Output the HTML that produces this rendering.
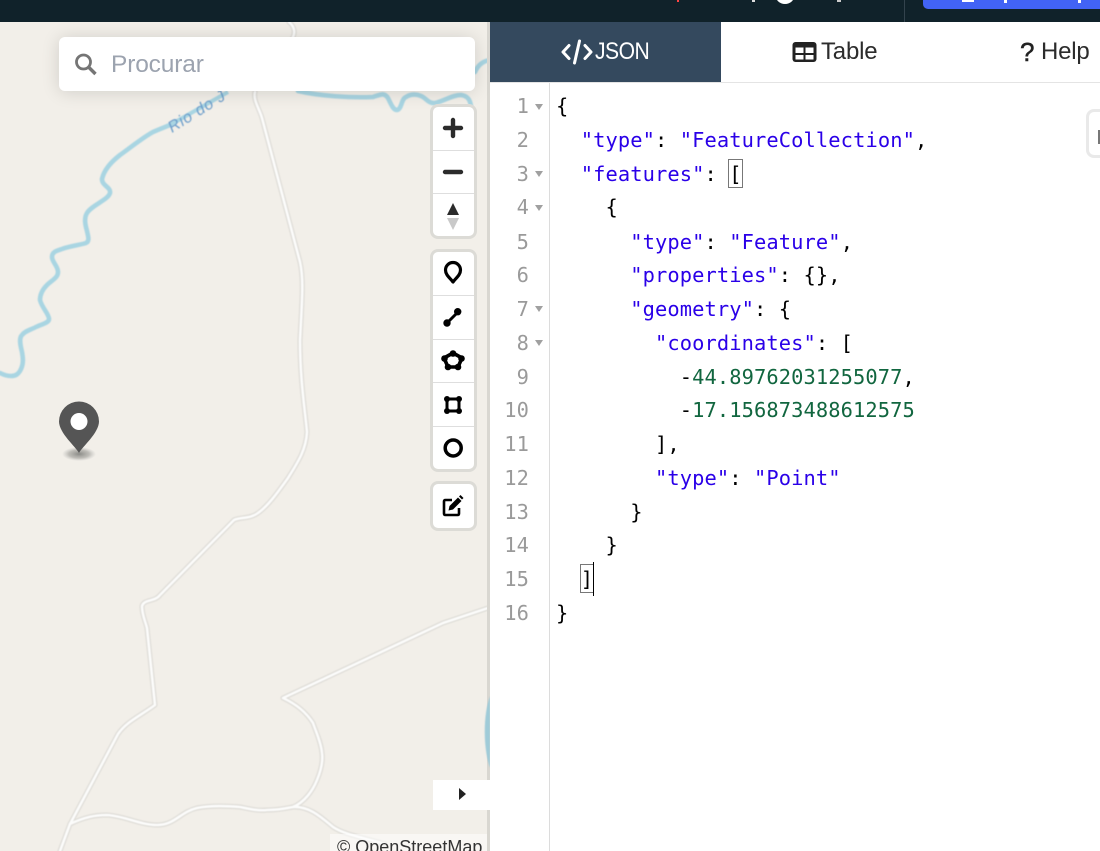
<!DOCTYPE html>
<html><head><meta charset="utf-8">
<style>
html,body{margin:0;padding:0;width:1100px;height:851px;overflow:hidden;background:#fff}
body{position:relative;font-family:"Liberation Sans",sans-serif}
.a{position:absolute}
.ln{position:absolute;left:490px;width:39px;text-align:right;font:20.4px/34px "DejaVu Sans Mono",monospace;letter-spacing:.07px;color:#9a9a9a}
.cl{position:absolute;left:556px;white-space:pre;font:20.4px/34px "DejaVu Sans Mono",monospace;letter-spacing:.1px;color:#000}
.s{color:#2a00e8}.n{color:#11663f}
.fold{position:absolute;left:535px;width:0;height:0;border-left:4.5px solid transparent;border-right:4.5px solid transparent;border-top:6px solid #a0a0a0}
.tab{position:absolute;top:22px;height:60px;font-size:24px;line-height:60px;color:#2c2c2c;letter-spacing:-.2px;white-space:nowrap}
.ctl{position:absolute;left:430px;width:47px;background:#fff;border-radius:8px;box-sizing:border-box;border:3px solid #dcdbd6}
.sep{position:absolute;left:433px;width:41px;height:1px;background:#dedede}
</style></head><body>

<!-- map -->
<div class="a" style="left:0;top:22px;width:490px;height:829px;background:#f2efe9;overflow:hidden"></div>
<svg class="a" style="left:0;top:0" width="490" height="851" viewBox="0 0 490 851" fill="none">
<g style="filter:blur(.5px)">
<g stroke="#dddbd6" stroke-width="5" stroke-linecap="round" stroke-linejoin="round">
<path d="M289 22C295 27 296 34 291 40M255 92C253 100 259 108 262 118L300 262C304 280 302 300 300 340C300 380 305 410 307 432C306 450 298 462 288 478C278 492 268 506 258 513C250 519 240 517 234 520L160 595C155 602 144 599 142 606C142 615 145 620 147 628L155 705C140 716 126 722 118 734L70 824L60 851"/>
<path d="M70 824C85 817 95 815 107 815C125 816 140 825 157 825C175 825 180 812 197 808C212 805 228 806 240 807C250 809 258 811 267 810C280 810 287 808 293 807C305 802 313 790 317 780C322 768 323 760 322 753C321 742 316 732 313 723C306 712 296 704 283 698L443 623L488 608"/>
<path d="M293 807C310 806 322 818 333 827C345 835 365 838 385 844"/>
</g>
<g stroke="#fcfcfb" stroke-width="2.6" stroke-linecap="round" stroke-linejoin="round">
<path d="M289 22C295 27 296 34 291 40M255 92C253 100 259 108 262 118L300 262C304 280 302 300 300 340C300 380 305 410 307 432C306 450 298 462 288 478C278 492 268 506 258 513C250 519 240 517 234 520L160 595C155 602 144 599 142 606C142 615 145 620 147 628L155 705C140 716 126 722 118 734L70 824L60 851"/>
<path d="M70 824C85 817 95 815 107 815C125 816 140 825 157 825C175 825 180 812 197 808C212 805 228 806 240 807C250 809 258 811 267 810C280 810 287 808 293 807C305 802 313 790 317 780C322 768 323 760 322 753C321 742 316 732 313 723C306 712 296 704 283 698L443 623L488 608"/>
<path d="M293 807C310 806 322 818 333 827C345 835 365 838 385 844"/>
</g>
<path d="M0 373C4 375 8 376 11 376C16 376 18 374 20 371C24 364 23 358 22 352C20 344 19 338 22 335C25 331 30 330 36 327C42 324 49 323 49 319C49 314 42 308 40 300C40 294 43 289 47 285C52 280 58 278 58 272C58 266 52 262 52 257C52 252 56 251 62 249C70 246 80 245 86 243C90 241 88 236 87 231C85 224 84 218 87 213C92 205 108 200 110 193C111 187 102 186 102 179C104 170 111 162 120 155C130 148 142 138 153 132C160 129 165 127 170 125" stroke="#a9d5e2" stroke-width="4.6" stroke-linecap="round" stroke-linejoin="round"/>
<path d="M170 125L228 92" stroke="#a9d5e2" stroke-width="4"/>
<path d="M298 91C320 96 350 98 373 97C380 95 384 92 388 98C391 104 393 110 397 110C402 109 401 99 406 97C411 94 416 94 421 96C426 98 429 104 435 103C442 102 452 95 461 95C468 96 470 100 471 106M475 72C478 65 483 61 490 60" stroke="#a9d5e2" stroke-width="4.6" stroke-linecap="round" stroke-linejoin="round"/>
<text transform="translate(172 133) rotate(-32)" font-family="Liberation Sans" font-style="italic" font-size="16" fill="#6f9fcb" letter-spacing=".8">Rio do J</text>
</g>
<rect x="487" y="22" width="3" height="829" fill="#d9d7d1"/>
<path d="M490 696C483 715 483 748 490 768Z" fill="#9fcbd8" style="filter:blur(.4px)"/>
</svg>

<!-- top bar -->
<div class="a" style="left:0;top:0;width:1100px;height:22px;background:#10222a"></div>
<div class="a" style="left:904px;top:0;width:1px;height:22px;background:#33434d"></div>
<div class="a" style="left:923px;top:0;width:177px;height:9px;background:#4263f5;border-radius:0 0 0 5px"></div>
<div class="a" style="left:775px;top:-7px;width:20px;height:10.5px;background:#fff;border-radius:0 0 10px 10px"></div>
<div class="a" style="left:752px;top:0;width:3px;height:2px;background:#ddd"></div>
<div class="a" style="left:677px;top:0;width:2px;height:2px;background:#f44"></div>
<div class="a" style="left:837px;top:0;width:4px;height:2px;background:#ccc"></div>
<div class="a" style="left:962px;top:0;width:12px;height:2px;background:#fff"></div>
<div class="a" style="left:1004px;top:0;width:3px;height:3px;background:#fff"></div>
<div class="a" style="left:1078px;top:0;width:3px;height:3px;background:#fff"></div>

<!-- search -->
<div class="a" style="left:59px;top:37px;width:416px;height:54px;background:#fff;border-radius:6px;box-shadow:0 1px 18px rgba(0,0,0,.14)"></div>
<svg class="a" style="left:72px;top:51px" width="28" height="26" viewBox="0 0 28 26" fill="none" stroke="#757575">
<circle cx="11.500" cy="11" r="7" stroke-width="2.800"/><path d="M16.500 16L23.500 23" stroke-width="3.400"/></svg>
<div class="a" style="left:111px;top:49px;font-size:24.500px;line-height:32px;color:#9ca3af;letter-spacing:-.15px">Procurar</div>

<!-- zoom controls -->
<div class="ctl" style="top:104px;height:135px"></div>
<div class="sep" style="top:150px"></div><div class="sep" style="top:193px"></div>
<svg class="a" style="left:430px;top:104px" width="47" height="135" viewBox="0 0 47 135">
<path d="M23 16V32M15 24H31" stroke="#2b2b2b" stroke-width="4.400" stroke-linecap="round"/>
<path d="M15 68H31" stroke="#2b2b2b" stroke-width="4.400" stroke-linecap="round"/>
<path d="M23 99L29 111H17Z" fill="#2b2b2b"/><path d="M17 114H29L23 126Z" fill="#c9c9c9"/>
</svg>

<!-- draw controls -->
<div class="ctl" style="top:249px;height:223px"></div>
<div class="sep" style="top:295px"></div><div class="sep" style="top:339px"></div><div class="sep" style="top:382px"></div><div class="sep" style="top:426px"></div>
<svg class="a" style="left:430px;top:249px" width="47" height="223" viewBox="0 0 47 223" fill="none" stroke="#000">
<path d="M23 33C20 29 15.500 26 15.500 21A7.500 7.500 0 0 1 30.500 21C30.500 26 26 29 23 33Z" stroke-width="3.200" stroke-linejoin="round"/>
<path d="M17 74L28 63" stroke-width="3"/><circle cx="17" cy="74" r="3.700" fill="#000" stroke="none"/><circle cx="27.700" cy="62.700" r="3.700" fill="#000" stroke="none"/>
<path d="M23 104L32 109L28 118H18L14 109Z" stroke-width="3.600" stroke-linejoin="round"/>
<g fill="#000" stroke="none"><circle cx="23" cy="104.500" r="3.300"/><circle cx="31.500" cy="109.500" r="3.300"/><circle cx="28" cy="118" r="3.300"/><circle cx="18" cy="118" r="3.300"/><circle cx="14.500" cy="109.500" r="3.300"/></g>
<rect x="17" y="150" width="12" height="12" stroke-width="3"/>
<g fill="#000" stroke="none"><circle cx="17" cy="150" r="3"/><circle cx="29" cy="150" r="3"/><circle cx="17" cy="162" r="3"/><circle cx="29" cy="162" r="3"/></g>
<circle cx="23.200" cy="199" r="8" stroke-width="3.500"/>
</svg>

<!-- edit control -->
<div class="ctl" style="top:481px;height:50px"></div>
<svg class="a" style="left:430px;top:481px" width="47" height="50" viewBox="0 0 47 50" fill="none" stroke="#000">
<path d="M22 19H15.500Q14 19 14 20.500V32.500Q14 34 15.500 34H27.500Q29 34 29 32.500V27" stroke-width="2.600"/>
<path d="M18.500 29.500L19.500 25L28 16.500L31.500 20L23 28.500Z" fill="#000" stroke="none"/><path d="M29 15.500L30.500 14L33.500 17L32 18.500Z" fill="#000" stroke="none"/>
</svg>

<!-- marker -->
<svg class="a" style="left:50px;top:394.500px" width="60" height="70" viewBox="0 0 60 70">
<defs><radialGradient id="g"><stop offset="0" stop-color="#8a8a86"/><stop offset=".6" stop-color="#a8a7a2" stop-opacity=".7"/><stop offset="1" stop-color="#bbb" stop-opacity="0"/></radialGradient></defs>
<ellipse cx="29" cy="59" rx="17" ry="7" fill="url(#g)"/>
<path d="M29 58C26 52 9 38 9 26.500A20 20 0 0 1 49 26.500C49 38 32 52 29 58Z" fill="#555"/>
<circle cx="29" cy="26.500" r="8.500" fill="#fff"/>
</svg>

<!-- collapse + attribution -->
<div class="a" style="left:433px;top:780px;width:57px;height:30px;background:#fff"></div>
<div class="a" style="left:459px;top:788px;width:0;height:0;border-left:7px solid #222;border-top:6px solid transparent;border-bottom:6px solid transparent"></div>
<div class="a" style="left:330px;top:834px;width:157px;height:17px;background:rgba(255,255,255,.5);overflow:hidden"><div style="position:absolute;left:7px;top:3px;font-size:18px;line-height:20px;color:#333;white-space:nowrap">© OpenStreetMap</div></div>

<!-- tabs -->
<div class="a" style="left:490px;top:22px;width:231px;height:60px;background:#34495e"></div>
<div class="a" style="left:490px;top:82px;width:610px;height:1px;background:#e4e4e4"></div>
<svg class="a" style="left:560px;top:38px" width="34" height="28" viewBox="0 0 34 28" fill="none" stroke="#fff" stroke-width="3">
<path d="M9 7.500L3 14L9 20.500M25 7.500L31 14L25 20.500" stroke-linecap="round" stroke-linejoin="round"/><path d="M19.500 3L14.500 25" stroke-linecap="round"/></svg>
<div class="tab" style="left:595px;color:#fff;letter-spacing:-.6px;transform:scaleX(.88);transform-origin:0 0">JSON</div>
<svg class="a" style="left:792px;top:41px" width="26" height="22" viewBox="0 0 26 22">
<rect x=".5" y="1" width="24" height="20" rx="3" fill="#222"/>
<rect x="3.500" y="6.500" width="8" height="5.500" fill="#fff"/><rect x="13.500" y="6.500" width="8" height="5.500" fill="#fff"/><rect x="3.500" y="14" width="8" height="4.500" fill="#fff"/><rect x="13.500" y="14" width="8" height="4.500" fill="#fff"/></svg>
<div class="tab" style="left:821px">Table</div>
<div class="a" style="left:1020px;top:22px;height:60px;font:26px/60px 'Liberation Sans',sans-serif;color:#222;-webkit-text-stroke:.5px #222">?</div>
<div class="tab" style="left:1041px">Help</div>

<!-- editor -->
<div class="a" style="left:549px;top:83px;width:1px;height:768px;background:#dcdcdc"></div>
<div class="a" style="left:1086px;top:109px;width:30px;height:49px;box-sizing:border-box;border:3px solid #e9e9e9;border-radius:8px;background:#fff"></div>
<div class="a" style="left:1098px;top:130px;width:2px;height:14px;background:#777"></div>

<div class="ln" style="top:89px">1</div><div class="ln" style="top:123px">2</div><div class="ln" style="top:157px">3</div><div class="ln" style="top:190px">4</div><div class="ln" style="top:225px">5</div><div class="ln" style="top:258px">6</div><div class="ln" style="top:292px">7</div><div class="ln" style="top:326px">8</div><div class="ln" style="top:360px">9</div><div class="ln" style="top:393px">10</div><div class="ln" style="top:427px">11</div><div class="ln" style="top:461px">12</div><div class="ln" style="top:495px">13</div><div class="ln" style="top:528px">14</div><div class="ln" style="top:562px">15</div><div class="ln" style="top:596px">16</div>
<div class="fold" style="top:104px"></div><div class="fold" style="top:171px"></div><div class="fold" style="top:205px"></div><div class="fold" style="top:306px"></div><div class="fold" style="top:340px"></div>

<div class="a" style="left:728px;top:159px;width:15px;height:29px;box-sizing:border-box;border:1px solid #777"></div>
<div class="a" style="left:580px;top:564px;width:14px;height:29px;box-sizing:border-box;border:1px solid #777"></div>
<div class="a" style="left:593px;top:562px;width:1px;height:34px;background:#000"></div>

<div class="cl" style="top:89px">{</div>
<div class="cl" style="top:123px">  <span class="s">"type"</span>: <span class="s">"FeatureCollection"</span>,</div>
<div class="cl" style="top:157px">  <span class="s">"features"</span>: [</div>
<div class="cl" style="top:190px">    {</div>
<div class="cl" style="top:225px">      <span class="s">"type"</span>: <span class="s">"Feature"</span>,</div>
<div class="cl" style="top:258px">      <span class="s">"properties"</span>: {},</div>
<div class="cl" style="top:292px">      <span class="s">"geometry"</span>: {</div>
<div class="cl" style="top:326px">        <span class="s">"coordinates"</span>: [</div>
<div class="cl" style="top:360px">          -<span class="n">44.89762031255077</span>,</div>
<div class="cl" style="top:393px">          -<span class="n">17.156873488612575</span></div>
<div class="cl" style="top:427px">        ],</div>
<div class="cl" style="top:461px">        <span class="s">"type"</span>: <span class="s">"Point"</span></div>
<div class="cl" style="top:495px">      }</div>
<div class="cl" style="top:528px">    }</div>
<div class="cl" style="top:562px">  ]</div>
<div class="cl" style="top:596px">}</div>
</body></html>
